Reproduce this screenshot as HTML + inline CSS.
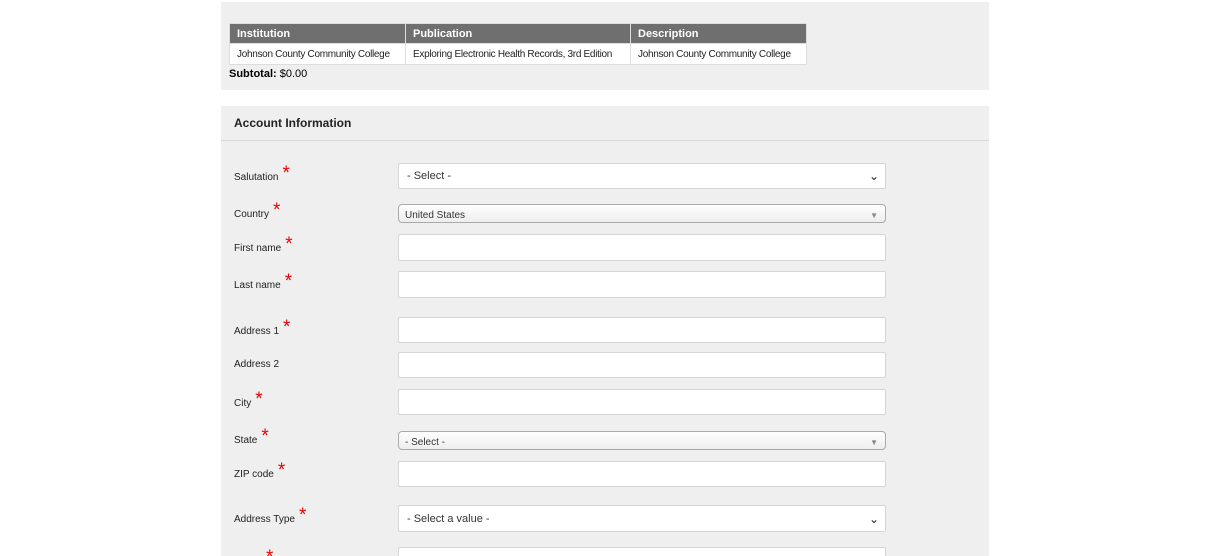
<!DOCTYPE html><html><head><style>
html,body{margin:0;width:1209px;height:556px;overflow:hidden}
body{background:#fff;font-family:"Liberation Sans",Arial,sans-serif;position:relative}
.p{position:absolute;left:221px;width:768px;background:#efefef}
table{position:absolute;left:229px;top:23px;border-collapse:collapse;font-size:10px;table-layout:fixed;width:577px}
th{background:#6f6f6f;color:#fff;text-align:left;font-size:11px;height:19px;padding:0 7px;border:1px solid #ddd;white-space:nowrap}
td{background:#fff;border:1px solid #ddd;height:20px;padding:0 7px;color:#222;white-space:nowrap;overflow:hidden;letter-spacing:-0.3px}
.l{position:absolute;left:234px;font-size:10px;color:#222;line-height:12px}
.l b{color:#e00;font-size:19px;font-weight:normal;position:relative;top:-1px;margin-left:4px;line-height:10px}
.f{position:absolute;left:398px;width:488px;background:#fff;border:1px solid #d6d6d6;border-radius:2px;font-size:11px;color:#333;box-sizing:border-box;padding-left:8px;display:flex;align-items:center}
.s2{background:linear-gradient(#fff,#eee);border-color:#aaa;border-radius:4px;font-size:10px;padding-left:6px;padding-top:3px}
.a{position:absolute;right:7px;font-size:8px;color:#888}
.c{position:absolute;right:6px;font-size:12px;color:#222}
</style></head><body>
<div class="p" style="top:2px;height:88px"></div>
<table><colgroup><col style="width:176px"><col style="width:225px"><col style="width:176px"></colgroup><tr><th>Institution</th><th>Publication</th><th>Description</th></tr>
<tr><td>Johnson County Community College</td><td>Exploring Electronic Health Records, 3rd Edition</td><td>Johnson County Community College</td></tr></table>
<div style="position:absolute;left:229px;top:68px;font-size:11px"><b>Subtotal:</b> $0.00</div>
<div class="p" style="top:106px;height:460px"></div>
<div style="position:absolute;left:221px;top:140px;width:768px;height:1px;background:#d8d8d8"></div>
<div style="position:absolute;left:234px;top:116px;font-size:12px;font-weight:bold;color:#222">Account Information</div>

<div class="l" style="top:170px">Salutation<b>*</b></div>
<div class="f" style="top:163px;height:26px">- Select -<span class="c">&#8964;</span></div>
<div class="l" style="top:207px">Country<b>*</b></div>
<div class="f s2" style="top:204px;height:19px">United States<span class="a">▼</span></div>
<div class="l" style="top:241px">First name<b>*</b></div>
<div class="f" style="top:234px;height:27px"></div>
<div class="l" style="top:278px">Last name<b>*</b></div>
<div class="f" style="top:271px;height:27px"></div>
<div class="l" style="top:324px">Address 1<b>*</b></div>
<div class="f" style="top:317px;height:26px"></div>
<div class="l" style="top:359px">Address 2</div>
<div class="f" style="top:352px;height:26px"></div>
<div class="l" style="top:396px">City<b>*</b></div>
<div class="f" style="top:389px;height:26px"></div>
<div class="l" style="top:433px">State<b>*</b></div>
<div class="f s2" style="top:431px;height:19px">- Select -<span class="a">▼</span></div>
<div class="l" style="top:467px">ZIP code<b>*</b></div>
<div class="f" style="top:461px;height:26px"></div>
<div class="l" style="top:512px">Address Type<b>*</b></div>
<div class="f" style="top:505px;height:27px">- Select a value -<span class="c">&#8964;</span></div>
<div class="l" style="top:554px"><b style="margin-left:32px">*</b></div>
<div class="f" style="top:547px;height:27px"></div>
</body></html>
